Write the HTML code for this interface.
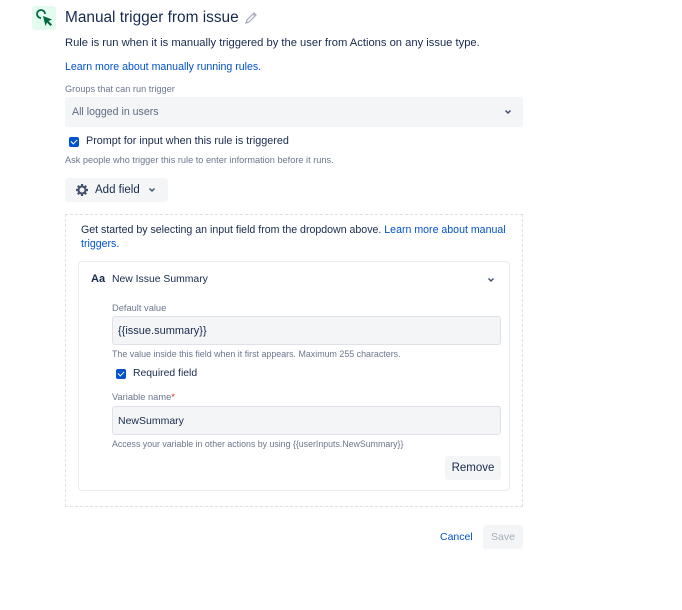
<!DOCTYPE html>
<html><head><meta charset="utf-8"><style>
body{margin:0;width:682px;height:610px;background:#fff;font-family:"Liberation Sans",sans-serif;color:#172b4d;position:relative;overflow:hidden}
.a{position:absolute;white-space:nowrap}
.s{font-size:12px}
.xs{font-size:9.2px;color:#6b778c}
.lbl{font-size:9.3px;color:#6b778c}
.lk{color:#0052cc;text-decoration:none}
.inp{position:absolute;background:#f4f5f7;border:1px solid #dfe1e6;border-radius:3px;box-sizing:border-box;font-size:11px;padding-left:5px;display:flex;align-items:center}
.cb{position:absolute;width:10px;height:10px;background:#0052cc;border-radius:2px}
.cb:after{content:"";position:absolute;left:3px;top:1px;width:3px;height:5px;border:solid #fff;border-width:0 1.5px 1.5px 0;transform:rotate(45deg)}
.btn{position:absolute;background:#f4f5f7;border-radius:3px;font-size:11.5px;display:flex;align-items:center;justify-content:center}
</style></head><body>
<div class="a" style="left:32px;top:6px;width:24px;height:24px;background:#e3fcef;border-radius:3px">
<svg width="24" height="24" viewBox="0 0 24 24"><path d="M9 12 A4 4 0 1 1 13 8" fill="none" stroke="#006644" stroke-width="1.8"/><path d="M11 10 L20 13.5 L16.5 15 L20 18.5 L18.5 20 L15 16.5 L13.5 20 Z" fill="#006644"/></svg></div>
<div class="a" style="left:65px;top:9px;font-size:15.4px">Manual trigger from issue</div>
<svg class="a" style="left:244px;top:11px" width="14" height="14" viewBox="0 0 14 14"><path d="M2 12 L3 9 L10 2 L12 4 L5 11 Z M9 3 L11 5" fill="none" stroke="#a5adba" stroke-width="1.2"/></svg>
<div class="a" style="left:65px;top:37px;font-size:11.2px">Rule is run when it is manually triggered by the user from Actions on any issue type.</div>
<div class="a lk" style="left:65px;top:61px;font-size:10.6px">Learn more about manually running rules.</div>
<div class="a xs" style="left:65px;top:84px">Groups that can run trigger</div>
<div class="inp" style="left:65px;top:97px;width:458px;height:30px;border:none;color:#5e6c84;padding-left:7px;font-size:10.6px">All logged in users</div>
<svg class="a" style="left:504px;top:108px" width="8" height="8" viewBox="0 0 8 8"><path d="M1.5 2.5 L4 5 L6.5 2.5" fill="none" stroke="#42526e" stroke-width="1.5"/></svg>
<div class="cb" style="left:69px;top:137px"></div>
<div class="a" style="left:86px;top:135px;font-size:10.8px">Prompt for input when this rule is triggered</div>
<div class="a xs" style="left:65px;top:155px">Ask people who trigger this rule to enter information before it runs.</div>
<div class="btn" style="left:65px;top:178px;width:103px;height:24px;justify-content:flex-start">
<svg style="margin-left:10px" width="14" height="14" viewBox="0 0 14 14"><circle cx="7" cy="7" r="3.5" fill="none" stroke="#42526e" stroke-width="2"/><path d="M7 1v2M7 11v2M1 7h2M11 7h2M2.8 2.8l1.4 1.4M9.8 9.8l1.4 1.4M2.8 11.2l1.4-1.4M9.8 4.2l1.4-1.4" stroke="#42526e" stroke-width="2.2"/></svg>
<span style="margin-left:6px">Add field</span>
<svg style="margin-left:8px" width="8" height="8" viewBox="0 0 8 8"><path d="M1.5 2.5 L4 5 L6.5 2.5" fill="none" stroke="#42526e" stroke-width="1.5"/></svg></div>
<div class="a" style="left:65px;top:214px;width:456px;height:291px;border:1px dashed #dfe1e6"></div>
<div class="a" style="left:81px;top:224px;font-size:10.6px">Get started by selecting an input field from the dropdown above. <span class="lk">Learn more about manual</span></div>
<div class="a lk" style="left:81px;top:238px;font-size:10.6px">triggers.</div>
<div class="a" style="left:78px;top:261px;width:430px;height:228px;border:1px solid #ebecf0;border-radius:4px"></div>
<div class="a" style="left:91px;top:273px;font-size:11px;font-weight:bold">Aa</div>
<div class="a" style="left:112px;top:274px;font-size:10.4px">New Issue Summary</div>
<svg class="a" style="left:487px;top:276px" width="8" height="8" viewBox="0 0 8 8"><path d="M1.5 2.5 L4 5 L6.5 2.5" fill="none" stroke="#42526e" stroke-width="1.5"/></svg>
<div class="a lbl" style="left:112px;top:303px">Default value</div>
<div class="inp" style="left:112px;top:316px;width:389px;height:29px">{{issue.summary}}</div>
<div class="a xs" style="left:112px;top:349px;font-size:8.9px">The value inside this field when it first appears. Maximum 255 characters.</div>
<div class="cb" style="left:116px;top:369px"></div>
<div class="a" style="left:133px;top:368px;font-size:10.4px">Required field</div>
<div class="a lbl" style="left:112px;top:392px">Variable name<span style="color:#de350b">*</span></div>
<div class="inp" style="left:112px;top:406px;width:389px;height:29px;font-size:10.5px">NewSummary</div>
<div class="a xs" style="left:112px;top:439px;font-size:8.8px">Access your variable in other actions by using {{userInputs.NewSummary}}</div>
<div class="btn" style="left:445px;top:456px;width:56px;height:24px">Remove</div>
<div class="a lk" style="left:440px;top:531px;font-size:10.5px">Cancel</div>
<div class="btn" style="left:483px;top:525px;width:40px;height:24px;color:#a5adba;font-size:10.5px">Save</div>
</body></html>
